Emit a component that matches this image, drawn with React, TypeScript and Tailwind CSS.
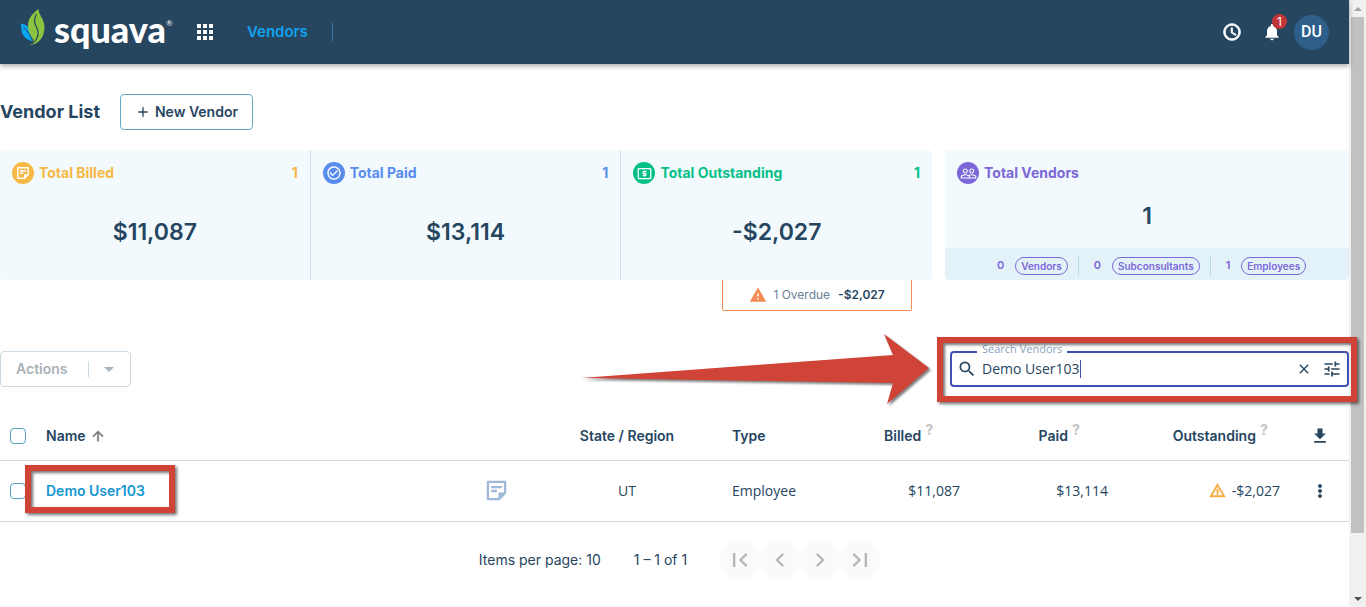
import type { ReactNode } from 'react';
import {
  MdAccessTime,
  MdAdd,
  MdApps,
  MdArrowDropDown,
  MdArrowUpward,
  MdCheckCircleOutline,
  MdChevronLeft,
  MdChevronRight,
  MdClose,
  MdFileDownload,
  MdFirstPage,
  MdLastPage,
  MdMoreVert,
  MdNotifications,
  MdPeopleOutline,
  MdSearch,
  MdTune,
  MdWarning,
  MdWarningAmber,
} from 'react-icons/md';

const overlayBox =
  'pointer-events-none absolute z-20 border-6 border-[#d04437] shadow-[2px_2px_3px_rgba(0,0,0,0.55),inset_2px_2px_3px_rgba(0,0,0,0.55)]';

// Thickens the drawn shape of a Material icon without outlining its empty 24x24 box.
const heavyIcon = '[&>path]:stroke-current [&>path[fill=none]]:stroke-none';

function NoteIcon({ className }: { className?: string }) {
  return (
    <svg viewBox="0 0 24 24" fill="none" stroke="currentColor" strokeWidth="2.4" className={className} aria-hidden>
      <path d="M3 3h18v11.5L14.5 21H3z" strokeLinejoin="round" />
      <path d="M6.5 8.5h11M6.5 12.5h6" />
      <path d="M14 14h7l-7 7z" fill="currentColor" stroke="none" />
    </svg>
  );
}

function CashIcon({ className }: { className?: string }) {
  return (
    <svg viewBox="0 0 24 24" fill="none" stroke="currentColor" strokeWidth="2" className={className} aria-hidden>
      <rect x="2" y="4" width="20" height="16" rx="1" />
      <path d="M15 9h-5v3h4v3H9M12 7v2M12 15v2" />
    </svg>
  );
}

function Logo() {
  return (
    <a href="#" className="flex items-start gap-2" aria-label="squava">
      <svg viewBox="0 0 26 38" className="h-[38px] w-[26px]" aria-hidden>
        <path d="M.5 14.5C5 15 9 17 10.500 23c.8 3 1 6 2.500 9C7 31.500 2 27 1.500 21c-.2-2-.3-4-1-6.500z" fill="#0aa5ee" />
        <path d="M3.500 18c4 3.500 6.500 8 9 13.500" fill="none" stroke="#26455f" strokeWidth="1" />
        <path
          d="M18.500 0c-.5 5 6 10 6 18C24.500 28 19 35.500 9 36c3-1 4.500-2.500 4.500-5C11 27 8 22 8 16.500 8 9 13 4 18.500 0z"
          fill="#8bc53f"
        />
        <path
          d="M16.500 5c-2 4-3 7-1 11 2.500 5 4 9 1 14-1.500 2.500-3 4-5 5"
          fill="none"
          stroke="#26455f"
          strokeWidth="1.2"
        />
      </svg>
      <span className="flex items-start font-['Lato',sans-serif] text-[36px] leading-10 font-black text-white">
        squava
        <sup className="top-2 text-[8px] leading-3 font-normal">®</sup>
      </span>
    </a>
  );
}

function Header() {
  return (
    <header className="relative z-10 flex h-16 items-center bg-[#26455f] pr-5 pl-5 shadow-[0_2px_5px_rgba(0,0,0,0.35)]">
      <div className="w-[174px] pb-1.5">
        <Logo />
      </div>
      <button type="button" aria-label="Apps" className="text-white">
        <MdApps size={24} className="-m-px size-6" />
      </button>
      <a href="#" className="ml-[31px] text-[15px] font-semibold text-[#0fa3f0]">
        Vendors
      </a>
      <span className="ml-6 h-[18px] w-px bg-[#3c74a0]" />
      <div className="ml-auto flex items-center">
        <button type="button" aria-label="Recent" className="text-white">
          <MdAccessTime size={20} className={heavyIcon} strokeWidth={1} />
        </button>
        <button type="button" aria-label="Notifications" className="relative ml-5 text-white">
          <MdNotifications size={20} />
          <span className="absolute -top-2 left-2.5 size-[15px] rounded-full bg-[#c23537] text-center text-xs leading-[15px]">
            1
          </span>
        </button>
        <button
          type="button"
          className="ml-3 size-[35px] rounded-full bg-[#2d5f8a] font-['Roboto',sans-serif] text-base font-medium text-white"
        >
          DU
        </button>
      </div>
    </header>
  );
}

interface CardTitleProps {
  icon: ReactNode;
  badge: string;
  tone: string;
  label: string;
  count?: string;
}

function CardTitle({ icon, badge, tone, label, count }: CardTitleProps) {
  return (
    <div className={`flex items-center px-3 pt-3 text-sm leading-[22px] font-bold ${tone}`}>
      <span className={`mr-[5px] flex size-[22px] items-center justify-center rounded-full text-white ${badge}`}>
        {icon}
      </span>
      <span>{label}</span>
      <span className="ml-auto">{count}</span>
    </div>
  );
}

const stats = [
  {
    label: 'Total Billed',
    amount: '$11,087',
    tone: 'text-[#f7b844]',
    badge: 'bg-[#f7b844]',
    icon: <NoteIcon className="size-[14px]" />,
  },
  {
    label: 'Total Paid',
    amount: '$13,114',
    tone: 'text-[#588ced]',
    badge: 'bg-[#588ced]',
    icon: <MdCheckCircleOutline size={16} />,
  },
  {
    label: 'Total Outstanding',
    amount: '-$2,027',
    tone: 'text-[#05bf87]',
    badge: 'bg-[#05bf87]',
    icon: <CashIcon className="size-[15px]" />,
  },
];

const groups = [
  { count: 0, label: 'Vendors' },
  { count: 0, label: 'Subconsultants' },
  { count: 1, label: 'Employees' },
];

function Summary() {
  return (
    <section className="mt-5 grid grid-cols-[30fr_13fr] items-start gap-[13px]">
      <div>
        <div className="grid h-[130px] grid-cols-3 divide-x divide-[#d3deea] rounded-sm bg-[#f2fafe]">
          {stats.map((s) => (
            <div key={s.label}>
              <CardTitle icon={s.icon} badge={s.badge} tone={s.tone} label={s.label} count="1" />
              <p className="mt-8 text-center text-[23px] leading-8 font-semibold">{s.amount}</p>
            </div>
          ))}
        </div>
        <div className="mr-5 ml-auto flex h-[31px] w-[190px] items-center justify-center rounded-b-xs border border-t-0 border-[#f58b55] text-xs">
          <MdWarning size={18} className="mr-1.5 text-[#f58b55]" />
          <span className="mr-2 text-[#6b7f93]">1 Overdue</span>
          <span className="font-semibold">-$2,027</span>
        </div>
      </div>

      <div className="flex h-[130px] flex-col rounded-sm bg-[#f2fafe]">
        <CardTitle
          icon={<MdPeopleOutline size={17} />}
          badge="bg-[#7c67d8]"
          tone="text-[#7c67d8]"
          label="Total Vendors"
        />
        <p className="mt-4 text-center text-[23px] leading-8 font-semibold">1</p>
        <ul className="mt-auto flex h-8 items-center justify-center divide-x divide-[#b5dbe6] rounded-b-sm bg-[#e3f2f9] pt-[3px] pl-1 text-[11px] font-semibold text-[#7c67d8]">
          {groups.map((g) => (
            <li key={g.label} className="flex h-5 items-center gap-[11px] pr-2.5 pl-[15px]">
              {g.count}
              <span className="rounded-full border border-[#7c67d8] px-[5px] text-[10px] leading-4">{g.label}</span>
            </li>
          ))}
        </ul>
      </div>
    </section>
  );
}

function Toolbar() {
  return (
    <div className="mt-10 flex items-start justify-between">
      <button
        type="button"
        disabled
        className="flex h-9 w-[131px] items-center rounded-sm border border-[#ccdbe3] pl-[15px] text-sm font-semibold text-[#a9b1b9]"
      >
        Actions
        <span className="ml-auto flex h-4 items-center border-l border-[#ccdbe3] pr-[9px] pl-2">
          <MdArrowDropDown size={24} />
        </span>
      </button>

      <div className="relative flex h-9 w-[399px] items-center rounded-sm border-2 border-[#3f51b5] pr-[5px] pl-[5px] font-['Open_Sans',sans-serif]">
        <label
          htmlFor="vendor-search"
          className="absolute -top-3 left-[25px] bg-white px-[5px] text-[11px] leading-4 text-[#8ba3bd]"
        >
          Search Vendors
        </label>
        <MdSearch size={20} />
        <input
          id="vendor-search"
          type="text"
          defaultValue="Demo User103"
          className="ml-[5px] field-sizing-content text-sm outline-none"
        />
        <span className="h-[18px] w-px bg-[#3f51b5]" />
        <button type="button" aria-label="Clear search" className="ml-auto">
          <MdClose size={16} />
        </button>
        <button type="button" aria-label="Filters" className="ml-2.5">
          <MdTune size={20} />
        </button>

        <span className={`${overlayBox} -top-4 -right-[10px] -bottom-[17px] -left-[15px]`} aria-hidden />
        <svg
          viewBox="580 331 352 76"
          className="pointer-events-none absolute right-full mr-5 h-[76px] w-[352px] overflow-visible drop-shadow-[2px_2px_1px_rgba(0,0,0,0.5)]"
          aria-hidden
        >
          <path d="M581 378 893 355 884 334 929 368 887 404 893 383z" fill="#d04437" />
        </svg>
      </div>
    </div>
  );
}

function Hint() {
  return (
    <button type="button" aria-label="Help" className="ml-1 -translate-y-1.5 text-sm font-extrabold text-[#c8c8c8]">
      ?
    </button>
  );
}

const checkbox = 'ml-2.5 block size-4 appearance-none rounded-sm border border-[#5aa3c0] bg-white';

function VendorTable() {
  return (
    <table className="mt-[25px] w-full table-fixed text-left text-sm">
      <colgroup>
        <col className="w-[46px]" />
        <col />
        <col className="w-[52px]" />
        <col className="w-[210px]" />
        <col className="w-[152px]" />
        <col className="w-[76px]" />
        <col className="w-[148px]" />
        <col className="w-[172px]" />
        <col className="w-[69px]" />
      </colgroup>
      <thead>
        <tr className="h-12 border-b border-[#ccdbe3] whitespace-nowrap [&>th]:font-semibold">
          <th>
            <input type="checkbox" aria-label="Select all vendors" className={checkbox} />
          </th>
          <th>
            <span className="flex items-center gap-1">
              Name <MdArrowUpward size={16} className={`text-[#757575] ${heavyIcon}`} strokeWidth={0.6} />
            </span>
          </th>
          <th />
          <th className="text-center">State / Region</th>
          <th>Type</th>
          <th>
            Billed
            <Hint />
          </th>
          <th className="pr-7 text-right">
            Paid
            <Hint />
          </th>
          <th className="pr-3 text-right">
            Outstanding
            <Hint />
          </th>
          <th className="pr-[19px]">
            <button type="button" aria-label="Download" className="ml-auto block">
              <MdFileDownload size={20} />
            </button>
          </th>
        </tr>
      </thead>
      <tbody>
        <tr className="h-[61px] border-b border-[#ccdbe3] font-['Open_Sans',sans-serif]">
          <td>
            <input type="checkbox" aria-label="Select Demo User103" className={checkbox} />
          </td>
          <td>
            <a
              href="#"
              className="relative inline-block font-['Inter',sans-serif] leading-5 font-semibold text-[#1496d3]"
            >
              Demo User103
              <span className={`${overlayBox} -top-4 -right-[30px] -bottom-3 -left-[21px]`} aria-hidden />
            </a>
          </td>
          <td>
            <NoteIcon className="mx-auto size-[23px] text-[#a0b8d8]" />
          </td>
          <td className="text-center">UT</td>
          <td>Employee</td>
          <td className="text-right">$11,087</td>
          <td className="text-right">$13,114</td>
          <td>
            <span className="flex items-center justify-end gap-1.5">
              <MdWarningAmber size={17} className={`text-[#f9a63a] ${heavyIcon}`} strokeWidth={0.6} />
              -$2,027
            </span>
          </td>
          <td className="pr-[19px]">
            <button type="button" aria-label="More options" className="ml-auto block">
              <MdMoreVert size={20} className={heavyIcon} strokeWidth={0.8} />
            </button>
          </td>
        </tr>
      </tbody>
    </table>
  );
}

const pageButtons = [
  { label: 'First page', Icon: MdFirstPage },
  { label: 'Previous page', Icon: MdChevronLeft },
  { label: 'Next page', Icon: MdChevronRight },
  { label: 'Last page', Icon: MdLastPage },
];

function Paginator() {
  return (
    <nav className="mt-[18px] flex items-center justify-center gap-[33px] pl-2.5 text-sm" aria-label="Pagination">
      <span>Items per page: 10</span>
      <span>1 – 1 of 1</span>
      <div className="flex">
        {pageButtons.map(({ label, Icon }) => (
          <button
            key={label}
            type="button"
            disabled
            aria-label={label}
            className="flex size-10 items-center justify-center rounded-full bg-[#fafafa] text-[#b8b8b8]"
          >
            <Icon size={28} />
          </button>
        ))}
      </div>
    </nav>
  );
}

function ScrollTrack() {
  return (
    <div
      className="sticky top-0 flex h-screen w-[17px] shrink-0 flex-col items-center bg-[#f1f1f1]"
      aria-hidden
    >
      <span className="flex h-[17px] items-center">
        <span className="border-x-4 border-b-4 border-x-transparent border-b-[#a3a3a3]" />
      </span>
      <span className="flex w-full grow flex-col px-0.5">
        <span className="h-[90%] bg-[#c1c1c1]" />
      </span>
      <span className="flex h-[17px] items-center">
        <span className="border-x-4 border-t-4 border-x-transparent border-t-[#505050]" />
      </span>
    </div>
  );
}

export default function App() {
  return (
    <div className="flex min-h-screen bg-white font-['Inter',sans-serif] text-[#26455f]">
      <div className="relative z-10 min-w-0 flex-1">
        <Header />
        <main className="pt-[30px]">
          <div className="flex items-center gap-5">
            <h1 className="text-lg font-bold">Vendor List</h1>
            <button
              type="button"
              className="flex h-9 w-[133px] items-center justify-center gap-1 rounded-sm border border-[#65a7c2] text-sm font-semibold"
            >
              <MdAdd size={16} />
              New Vendor
            </button>
          </div>
          <Summary />
          <Toolbar />
          <VendorTable />
          <Paginator />
        </main>
      </div>
      <ScrollTrack />
    </div>
  );
}
